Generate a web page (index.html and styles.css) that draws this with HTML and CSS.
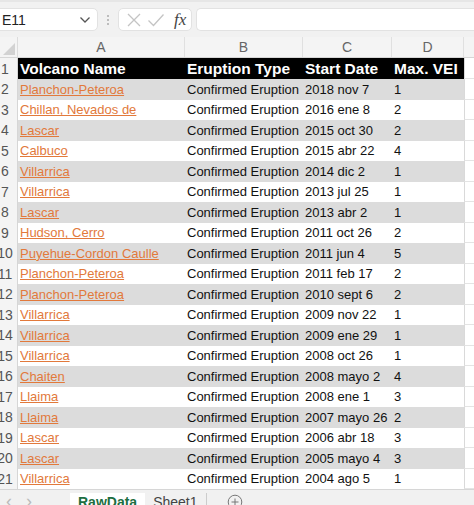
FILE: index.html
```html
<!DOCTYPE html>
<html>
<head>
<meta charset="utf-8">
<link rel="stylesheet" href="styles.css">
</head>
<body>
<div class="app">
  <div class="formula-bar">
    <div class="namebox">
      <span class="cellref">E11</span>
      <svg class="chev" width="12" height="8" viewBox="0 0 12 8"><path d="M1.5 1.5 L6 6 L10.5 1.5" fill="none" stroke="#555" stroke-width="1.3"/></svg>
    </div>
    <div class="dots"><span></span><span></span><span></span></div>
    <div class="fxbox">
      <svg width="16" height="16" viewBox="0 0 16 16"><path d="M2 2 L14 14 M14 2 L2 14" stroke="#c4c4c4" stroke-width="1.3" fill="none"/></svg>
      <svg width="18" height="16" viewBox="0 0 18 16"><path d="M1.5 8.5 L6.5 13.5 L16.5 2.5" stroke="#c4c4c4" stroke-width="1.3" fill="none"/></svg>
      <span class="fx">fx</span>
    </div>
    <div class="input"></div>
  </div>

  <div class="colheads">
    <div class="corner"><span class="tri"></span></div>
    <div class="ch">A</div>
    <div class="ch">B</div>
    <div class="ch">C</div>
    <div class="ch">D</div>
    <div class="ch last"></div>
  </div>

  <div class="sheet">
    <div class="row head"><div class="rn"><span>1</span></div><div class="c">Volcano Name</div><div class="c">Eruption Type</div><div class="c">Start Date</div><div class="c">Max. VEI</div><div class="e"></div></div>
    <div class="row g"><div class="rn"><span>2</span></div><div class="c"><a>Planchon-Peteroa</a></div><div class="c">Confirmed Eruption</div><div class="c">2018 nov 7</div><div class="c">1</div><div class="e"></div></div>
    <div class="row"><div class="rn"><span>3</span></div><div class="c"><a>Chillan, Nevados de</a></div><div class="c">Confirmed Eruption</div><div class="c">2016 ene 8</div><div class="c">2</div><div class="e"></div></div>
    <div class="row g"><div class="rn"><span>4</span></div><div class="c"><a>Lascar</a></div><div class="c">Confirmed Eruption</div><div class="c">2015 oct 30</div><div class="c">2</div><div class="e"></div></div>
    <div class="row"><div class="rn"><span>5</span></div><div class="c"><a>Calbuco</a></div><div class="c">Confirmed Eruption</div><div class="c">2015 abr 22</div><div class="c">4</div><div class="e"></div></div>
    <div class="row g"><div class="rn"><span>6</span></div><div class="c"><a>Villarrica</a></div><div class="c">Confirmed Eruption</div><div class="c">2014 dic 2</div><div class="c">1</div><div class="e"></div></div>
    <div class="row"><div class="rn"><span>7</span></div><div class="c"><a>Villarrica</a></div><div class="c">Confirmed Eruption</div><div class="c">2013 jul 25</div><div class="c">1</div><div class="e"></div></div>
    <div class="row g"><div class="rn"><span>8</span></div><div class="c"><a>Lascar</a></div><div class="c">Confirmed Eruption</div><div class="c">2013 abr 2</div><div class="c">1</div><div class="e"></div></div>
    <div class="row"><div class="rn"><span>9</span></div><div class="c"><a>Hudson, Cerro</a></div><div class="c">Confirmed Eruption</div><div class="c">2011 oct 26</div><div class="c">2</div><div class="e"></div></div>
    <div class="row g"><div class="rn"><span>10</span></div><div class="c"><a>Puyehue-Cordon Caulle</a></div><div class="c">Confirmed Eruption</div><div class="c">2011 jun 4</div><div class="c">5</div><div class="e"></div></div>
    <div class="row"><div class="rn"><span>11</span></div><div class="c"><a>Planchon-Peteroa</a></div><div class="c">Confirmed Eruption</div><div class="c">2011 feb 17</div><div class="c">2</div><div class="e"></div></div>
    <div class="row g"><div class="rn"><span>12</span></div><div class="c"><a>Planchon-Peteroa</a></div><div class="c">Confirmed Eruption</div><div class="c">2010 sept 6</div><div class="c">2</div><div class="e"></div></div>
    <div class="row"><div class="rn"><span>13</span></div><div class="c"><a>Villarrica</a></div><div class="c">Confirmed Eruption</div><div class="c">2009 nov 22</div><div class="c">1</div><div class="e"></div></div>
    <div class="row g"><div class="rn"><span>14</span></div><div class="c"><a>Villarrica</a></div><div class="c">Confirmed Eruption</div><div class="c">2009 ene 29</div><div class="c">1</div><div class="e"></div></div>
    <div class="row"><div class="rn"><span>15</span></div><div class="c"><a>Villarrica</a></div><div class="c">Confirmed Eruption</div><div class="c">2008 oct 26</div><div class="c">1</div><div class="e"></div></div>
    <div class="row g"><div class="rn"><span>16</span></div><div class="c"><a>Chaiten</a></div><div class="c">Confirmed Eruption</div><div class="c">2008 mayo 2</div><div class="c">4</div><div class="e"></div></div>
    <div class="row"><div class="rn"><span>17</span></div><div class="c"><a>Llaima</a></div><div class="c">Confirmed Eruption</div><div class="c">2008 ene 1</div><div class="c">3</div><div class="e"></div></div>
    <div class="row g"><div class="rn"><span>18</span></div><div class="c"><a>Llaima</a></div><div class="c">Confirmed Eruption</div><div class="c">2007 mayo 26</div><div class="c">2</div><div class="e"></div></div>
    <div class="row"><div class="rn"><span>19</span></div><div class="c"><a>Lascar</a></div><div class="c">Confirmed Eruption</div><div class="c">2006 abr 18</div><div class="c">3</div><div class="e"></div></div>
    <div class="row g"><div class="rn"><span>20</span></div><div class="c"><a>Lascar</a></div><div class="c">Confirmed Eruption</div><div class="c">2005 mayo 4</div><div class="c">3</div><div class="e"></div></div>
    <div class="row"><div class="rn"><span>21</span></div><div class="c"><a>Villarrica</a></div><div class="c">Confirmed Eruption</div><div class="c">2004 ago 5</div><div class="c">1</div><div class="e"></div></div>
  </div>

  <div class="tabbar">
    <div class="nav"><span>‹</span><span>›</span></div>
    <div class="tab active">RawData</div>
    <div class="tab">Sheet1</div>
    <div class="add">
      <svg width="16" height="16" viewBox="0 0 16 16"><circle cx="8" cy="8" r="6.8" fill="none" stroke="#777" stroke-width="1"/><path d="M8 4.5 V11.5 M4.5 8 H11.5" stroke="#777" stroke-width="1"/></svg>
    </div>
  </div>
</div>
</body>
</html>
```

FILE: styles.css
```css
* { box-sizing: border-box; }
body {
  margin: 0;
  font-family: "Liberation Sans", Arial, sans-serif;
  background: #fff;
}
.app {
  width: 474px;
  height: 505px;
  overflow: hidden;
  display: flex;
  flex-direction: column;
}
.formula-bar {
  height: 37px;
  flex: none;
  display: flex;
  align-items: center;
  background: #f1f1f1;
  border-top: 2px solid #e6e6e6;
}
.namebox {
  width: 104px;
  height: 23px;
  margin-left: -6px;
  background: #fff;
  border: 1px solid #e2e2e2;
  border-radius: 5px;
  display: flex;
  align-items: center;
  padding-left: 7px;
  padding-right: 6px;
  font-size: 14px;
  color: #222;
}
.cellref { flex: 1; }
.dots {
  width: 20px;
  display: flex;
  flex-direction: column;
  align-items: center;
  gap: 2px;
}
.dots span {
  width: 2px;
  height: 2px;
  border-radius: 50%;
  background: #aaa;
}
.fxbox {
  width: 74px;
  height: 23px;
  background: #fff;
  border: 1px solid #e2e2e2;
  border-radius: 5px;
  display: flex;
  align-items: center;
  gap: 5px;
  padding-left: 7px;
}
.fx {
  font-family: "Liberation Serif", "Times New Roman", serif;
  font-style: italic;
  font-size: 17px;
  color: #444;
  margin-left: 4px;
}
.input {
  flex: 1;
  height: 23px;
  margin-left: 4px;
  background: #fff;
  border: 1px solid #e2e2e2;
  border-right: none;
  border-radius: 5px 0 0 5px;
}
.colheads {
  height: 21px;
  flex: none;
  display: grid;
  grid-template-columns: 18px 167px 118px 89px 72px 1fr;
  background: #f4f4f4;
  border-bottom: 1px solid #d6d6d6;
}
.corner {
  position: relative;
  border-right: 1px solid #dcdcdc;
}
.tri {
  position: absolute;
  right: 2px;
  bottom: 2px;
  width: 0;
  height: 0;
  border-left: 12px solid transparent;
  border-bottom: 12px solid #d2d2d2;
}
.ch {
  display: flex;
  align-items: center;
  justify-content: center;
  font-size: 14px;
  color: #666;
  border-right: 1px solid #e0e0e0;
}
.ch.last { border-right: none; }
.sheet {
  flex: none;
}
.row {
  height: 20.5px;
  display: grid;
  grid-template-columns: 18px 167px 118px 89px 72px 1fr;
  font-size: 13px;
  color: #111;
  background: #fff;
}
.rn {
  background: #f4f4f4;
  border-right: 1px solid #d6d6d6;
  overflow: hidden;
  display: flex;
  align-items: center;
}
.rn span {
  flex: none;
  width: 30px;
  margin-left: -10px;
  text-align: center;
  font-size: 14px;
  color: #555;
}
.c {
  display: flex;
  align-items: center;
  padding-left: 2px;
  white-space: nowrap;
  overflow: visible;
}
.row.g .c { background: #dcdcdc; }
.row.head {
  height: 21px;
}
.row.head .c {
  background: #000;
  color: #fff;
  font-weight: bold;
  font-size: 15.5px;
}
.e {
  border-left: 1px solid #d9d9d9;
  border-bottom: 1px solid #e4e4e4;
}
a {
  color: #e2793b;
  text-decoration: underline;
  text-underline-offset: 1px;
}
.tabbar {
  flex: 1;
  display: flex;
  align-items: flex-start;
  background: #f1f1f1;
  border-top: 1px solid #d6d6d6;
  padding-top: 3px;
}
.nav {
  width: 70px;
  display: flex;
  gap: 14px;
  padding-left: 6px;
  color: #bbb;
  font-size: 18px;
  line-height: 16px;
}
.tab {
  height: 20px;
  padding: 1px 8px 0;
  font-size: 14px;
  color: #444;
  border-right: 1px solid #ccc;
}
.tab.active {
  background: #fff;
  color: #1d6e41;
  font-weight: bold;
  border-right: none;
}
.add {
  padding-left: 20px;
  padding-top: 1px;
}
```
